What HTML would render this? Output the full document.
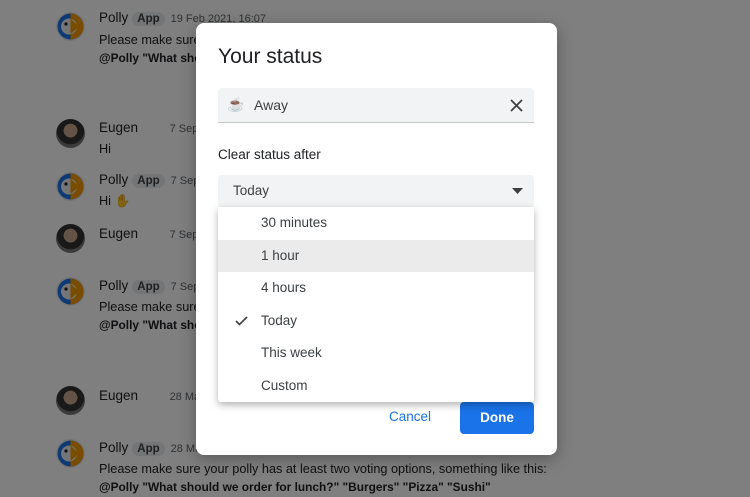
<!DOCTYPE html>
<html><head><style>
*{margin:0;padding:0;box-sizing:border-box}
body{width:750px;height:497px;overflow:hidden;background:#fff;font-family:"Liberation Sans",sans-serif;position:relative}
.bg{position:absolute;inset:0}
.t{position:absolute;font-size:12.7px;color:#202124;white-space:nowrap}
.b{font-weight:bold;font-size:11.9px}
.n{font-size:13.5px;color:#202124}
.d{font-size:11px;color:#5f6368}
.app{display:inline-block;background:#e8eaed;border-radius:8px;padding:1px 5px;font-size:11.5px;font-weight:bold;color:#3c4043;margin:0 6px 0 4px}
.av{position:absolute;left:56px;width:29px;height:29px;border-radius:50%}
.p{background:#e8eaed;overflow:hidden}
.e{background:radial-gradient(circle at 50% 40%,#c9a88f 0 30%,#333 31% 60%,#777 61%)}
.ov{position:absolute;inset:0;background:rgba(0,0,0,0.5)}
.dlg{position:absolute;left:196px;top:23px;width:361px;height:432px;background:#fff;border-radius:8px;box-shadow:0 4px 16px rgba(0,0,0,.3)}
.menu{position:absolute;left:218px;top:207px;width:316px;height:195px;background:#fff;box-shadow:0 3px 8px rgba(0,0,0,.3);border-radius:0 0 3px 3px}
.it{position:absolute;left:0;width:316px;height:32px;line-height:32px;padding-left:43px;font-size:13.5px;color:#3c4043}
</style></head><body>
<div class="bg">
<div class="av p" style="top:12px"><svg width="29" height="29"><circle cx="14.5" cy="14.5" r="13" fill="#1a73e8"/><path d="M14.5 1.5A13 13 0 0 1 14.5 27.5Z" fill="#f29900"/><circle cx="13" cy="14.5" r="8" fill="#e8eaed"/><path d="M14.5 6.5L23 14.5L14.5 22Z" fill="#f29900"/><circle cx="10" cy="12" r="1.6" fill="#202124"/></svg></div>
<div class="t" style="left:99px;top:10px"><span class="n">Polly</span><span class="app">App</span><span class="d">19 Feb 2021, 16:07</span></div>
<div class="t" style="left:99px;top:33px">Please make sure your polly has at least two voting options, something like this:</div>
<div class="t b" style="left:99px;top:51px">@Polly "What should we order for lunch?" "Burgers" "Pizza" "Sushi"</div>
<div class="av e" style="top:119px"></div>
<div class="t" style="left:99px;top:120px"><span class="n">Eugen</span> <span class="d" style="margin-left:28px">7 September</span></div>
<div class="t" style="left:99px;top:142px">Hi</div>
<div class="av p" style="top:172px"><svg width="29" height="29"><circle cx="14.5" cy="14.5" r="13" fill="#1a73e8"/><path d="M14.5 1.5A13 13 0 0 1 14.5 27.5Z" fill="#f29900"/><circle cx="13" cy="14.5" r="8" fill="#e8eaed"/><path d="M14.5 6.5L23 14.5L14.5 22Z" fill="#f29900"/><circle cx="10" cy="12" r="1.6" fill="#202124"/></svg></div>
<div class="t" style="left:99px;top:172px"><span class="n">Polly</span><span class="app">App</span><span class="d">7 September</span></div>
<div class="t" style="left:99px;top:194px">Hi <span style="color:#f2b33d">✋</span></div>
<div class="av e" style="top:224px"></div>
<div class="t" style="left:99px;top:226px"><span class="n">Eugen</span> <span class="d" style="margin-left:28px">7 September</span></div>
<div class="av p" style="top:277px"><svg width="29" height="29"><circle cx="14.5" cy="14.5" r="13" fill="#1a73e8"/><path d="M14.5 1.5A13 13 0 0 1 14.5 27.5Z" fill="#f29900"/><circle cx="13" cy="14.5" r="8" fill="#e8eaed"/><path d="M14.5 6.5L23 14.5L14.5 22Z" fill="#f29900"/><circle cx="10" cy="12" r="1.6" fill="#202124"/></svg></div>
<div class="t" style="left:99px;top:278px"><span class="n">Polly</span><span class="app">App</span><span class="d">7 September</span></div>
<div class="t" style="left:99px;top:300px">Please make sure your polly has at least two voting options</div>
<div class="t b" style="left:99px;top:318px">@Polly "What should we order"</div>
<div class="av e" style="top:386px"></div>
<div class="t" style="left:99px;top:388px"><span class="n">Eugen</span> <span class="d" style="margin-left:28px">28 May</span></div>
<div class="av p" style="top:439px"><svg width="29" height="29"><circle cx="14.5" cy="14.5" r="13" fill="#1a73e8"/><path d="M14.5 1.5A13 13 0 0 1 14.5 27.5Z" fill="#f29900"/><circle cx="13" cy="14.5" r="8" fill="#e8eaed"/><path d="M14.5 6.5L23 14.5L14.5 22Z" fill="#f29900"/><circle cx="10" cy="12" r="1.6" fill="#202124"/></svg></div>
<div class="t" style="left:99px;top:440px"><span class="n">Polly</span><span class="app">App</span><span class="d">28 May</span></div>
<div class="t" style="left:99px;top:462px">Please make sure your polly has at least two voting options, something like this:</div>
<div class="t b" style="left:99px;top:480px">@Polly "What should we order for lunch?" "Burgers" "Pizza" "Sushi"</div>
</div>
<div class="ov"></div>
<div class="dlg">
<div style="position:absolute;left:22px;top:22px;font-size:21px;color:#202124">Your status</div>
<div style="position:absolute;left:22px;top:65px;width:316px;height:35px;background:#f1f3f4;border-radius:4px 4px 0 0;border-bottom:1px solid #c4c7c5">
<span style="position:absolute;left:9px;top:8px;font-size:14px">☕</span>
<span style="position:absolute;left:36px;top:9px;font-size:14px;color:#3c4043">Away</span>
<svg style="position:absolute;right:11px;top:11px" width="13" height="13"><path d="M1 1L12 12M12 1L1 12" stroke="#3c4043" stroke-width="1.8"/></svg>
</div>
<div style="position:absolute;left:22px;top:124px;font-size:13.5px;color:#202124">Clear status after</div>
<div style="position:absolute;left:22px;top:152px;width:316px;height:32px;background:#f1f3f4;border-radius:4px 4px 0 0">
<span style="position:absolute;left:15px;top:8px;font-size:13.5px;color:#3c4043">Today</span>
<svg style="position:absolute;right:11px;top:13px" width="11" height="6"><path d="M0 0H11L5.5 6Z" fill="#3c4043"/></svg>
</div>
<div style="position:absolute;left:193px;top:386px;font-size:13.5px;color:#1a73e8">Cancel</div>
<div style="position:absolute;left:264px;top:379px;width:74px;height:32px;background:#1a73e8;border-radius:4px;color:#fff;font-size:13.5px;font-weight:bold;text-align:center;line-height:32px">Done</div>
</div>
<div class="menu">
<div class="it" style="top:0">30 minutes</div>
<div class="it" style="top:33px;background:#ebebeb">1 hour</div>
<div class="it" style="top:65px">4 hours</div>
<div class="it" style="top:98px">Today<svg style="position:absolute;left:17px;top:11px" width="13" height="10"><path d="M1 5L4.5 8.5L12 1" stroke="#3c4043" stroke-width="1.6" fill="none"/></svg></div>
<div class="it" style="top:130px">This week</div>
<div class="it" style="top:163px">Custom</div>
</div>
</body></html>
